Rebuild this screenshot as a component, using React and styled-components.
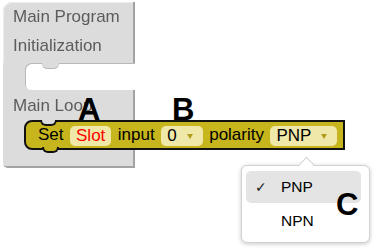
import React from "react"
import styled, { createGlobalStyle } from "styled-components"

const GlobalStyle = createGlobalStyle`
  html, body {
    margin: 0;
    padding: 0;
    background: #ffffff;
  }
`

const GREY = "#dcdcdc"
const OLIVE = "#c7b51d"

export default function App() {
  return (
    <Workspace>
      <GlobalStyle />

      <ProcBlock>
        <BlockHead>
          <BlockLabel>Main Program</BlockLabel>
          <BlockLabel>Initialization</BlockLabel>
        </BlockHead>
        <SlotRow>
          <Arm />
          <Mouth />
        </SlotRow>
        <BlockFoot>
          <BlockLabel>Main Loop</BlockLabel>
        </BlockFoot>
      </ProcBlock>

      <StatementBlock>
        <Word>Set</Word>
        <Field $red>Slot</Field>
        <Word>input</Word>
        <Field $dropdown>
          0<Arrow />
        </Field>
        <Word>polarity</Word>
        <Field $dropdown>
          PNP<Arrow />
        </Field>
      </StatementBlock>

      <Menu>
        <MenuItem $active>
          <Check>✓</Check>PNP
        </MenuItem>
        <MenuItem>
          <Check />NPN
        </MenuItem>
      </Menu>

      <Callout $left={78} $top={94}>A</Callout>
      <Callout $left={172} $top={94}>B</Callout>
      <Callout $left={336} $top={189}>C</Callout>
    </Workspace>
  )
}

const Workspace = styled.div`
  position: relative;
  width: 374px;
  height: 250px;
  overflow: hidden;
  background: #ffffff;
`

const ProcBlock = styled.div`
  position: absolute;
  left: 3px;
  top: 2px;
  width: 132px;
  display: flex;
  flex-direction: column;
  font-family: "Liberation Sans", Arial, sans-serif;
  font-size: 17px;
  color: #5c5c5c;
  filter: blur(0.45px);
`

const BlockLabel = styled.div`
  line-height: 29px;
  white-space: nowrap;
`

const BlockHead = styled.div`
  height: 61px;
  box-sizing: border-box;
  padding-left: 10px;
  background: ${GREY};
  border-radius: 9px 0 0 0;
  box-shadow: inset -2px 0 0 #a2a2a2, inset 1px 1px 0 #ececec;
`

const SlotRow = styled.div`
  display: flex;
  height: 27px;
  background: ${GREY};
`

const Arm = styled.div`
  width: 22px;
  background: ${GREY};
`

const Mouth = styled.div`
  position: relative;
  flex: 1;
  background: #ffffff;
  border-radius: 6px 0 0 6px;
  box-shadow: inset 1px 1px 0 #b8b8b8;

  &::before {
    content: "";
    position: absolute;
    left: 17px;
    top: 0;
    width: 17px;
    height: 5px;
    background: ${GREY};
    border-radius: 0 0 8px 8px;
    box-shadow: 0 1px 0 #b8b8b8;
  }
`

const BlockFoot = styled.div`
  height: 78px;
  box-sizing: border-box;
  padding: 1px 0 0 10px;
  background: ${GREY};
  border-radius: 0 0 0 5px;
  box-shadow: inset -2px -2px 0 #a2a2a2;
`

const StatementBlock = styled.div`
  position: absolute;
  left: 24px;
  top: 120px;
  width: 321px;
  height: 30px;
  box-sizing: border-box;
  display: flex;
  align-items: center;
  gap: 6.5px;
  padding-left: 12px;
  background: ${OLIVE};
  border: 2px solid #111111;
  border-radius: 8px 0 0 8px;
  font-family: "Liberation Sans", Arial, sans-serif;
  font-size: 17px;
  color: #000000;

  &::before {
    content: "";
    position: absolute;
    left: 14px;
    top: -2px;
    width: 13px;
    height: 4px;
    background: ${GREY};
    border: 2px solid #111111;
    border-top: none;
    border-radius: 0 0 8px 8px;
  }

  &::after {
    content: "";
    position: absolute;
    left: 16px;
    top: 25px;
    width: 13px;
    height: 4px;
    background: ${OLIVE};
    border: 2px solid #111111;
    border-top: none;
    border-radius: 0 0 8px 8px;
  }
`

const Word = styled.span`
  white-space: nowrap;
`

const Field = styled.span`
  display: inline-flex;
  align-items: center;
  gap: 10px;
  height: 20px;
  margin-top: 2px;
  padding: ${(p) => (p.$dropdown ? "0 10px 0 6px" : "0 6px")};
  background: #efe8a8;
  border-radius: 5px;
  color: ${(p) => (p.$red ? "#ff0000" : "#000000")};
  white-space: nowrap;
`

const Arrow = styled.span`
  width: 0;
  height: 0;
  border-left: 3px solid transparent;
  border-right: 3px solid transparent;
  border-top: 5px solid #b19d1c;
`

const Menu = styled.div`
  position: absolute;
  left: 241px;
  top: 165px;
  width: 129px;
  height: 78px;
  box-sizing: border-box;
  display: flex;
  flex-direction: column;
  gap: 2px;
  padding: 5px 8px 5px 4px;
  background: #ffffff;
  border: 1px solid #d2d2d2;
  border-radius: 6px;
  box-shadow: 0 1px 4px rgba(0, 0, 0, 0.22);
  font-family: "Liberation Sans", Arial, sans-serif;
  font-size: 15.5px;
  color: #000000;

  &::before {
    content: "";
    position: absolute;
    left: 59px;
    top: -7px;
    width: 10px;
    height: 10px;
    background: #ffffff;
    border-left: 1px solid #d2d2d2;
    border-top: 1px solid #d2d2d2;
    transform: rotate(45deg);
  }
`

const MenuItem = styled.div`
  position: relative;
  display: flex;
  align-items: center;
  height: 32px;
  padding-left: 9px;
  border-radius: 5px;
  background: ${(p) => (p.$active ? "#e4e4e4" : "transparent")};
`

const Check = styled.span`
  width: 26px;
  font-family: "DejaVu Sans", sans-serif;
  font-size: 14px;
  color: #222222;
`

const Callout = styled.div`
  position: absolute;
  left: ${(p) => p.$left}px;
  top: ${(p) => p.$top}px;
  font-family: "Liberation Sans", Arial, sans-serif;
  font-weight: 700;
  font-size: 31px;
  line-height: 1;
  color: #000000;
`
